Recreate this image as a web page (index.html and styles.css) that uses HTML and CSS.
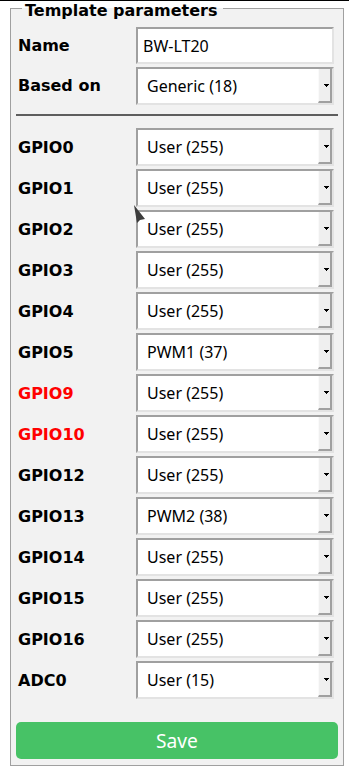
FILE: index.html
```html
<!DOCTYPE html>
<html lang="en">
<head>
  <meta charset="UTF-8" />
  <meta name="viewport" content="width=device-width, initial-scale=1.0" />
  <title>Template parameters</title>
  <link rel="stylesheet" href="styles.css">
</head>
<body>
  <div class="topline"></div>

  <fieldset class="tpl">
    <legend>Template parameters</legend>

    <div class="head">
      <div class="row name-row">
        <label for="s1">Name</label>
        <input id="s1" type="text" value="BW-LT20" />
      </div>
      <div class="row">
        <label for="g99">Based on</label>
        <div class="sel">
          <select id="g99"><option>Generic (18)</option></select>
          <span class="arrow"><svg width="5" height="3" viewBox="0 0 5 3"><path d="M0 0h5v1h-1v1h-1v1h-1v-1h-1v-1h-1z"/></svg></span>
        </div>
      </div>
    </div>

    <hr />

    <div class="gpios">
      <div class="row">
        <label for="g0">GPIO0</label>
        <div class="sel"><select id="g0"><option>User (255)</option></select><span class="arrow"><svg width="5" height="3" viewBox="0 0 5 3"><path d="M0 0h5v1h-1v1h-1v1h-1v-1h-1v-1h-1z"/></svg></span></div>
      </div>
      <div class="row">
        <label for="g1">GPIO1</label>
        <div class="sel"><select id="g1"><option>User (255)</option></select><span class="arrow"><svg width="5" height="3" viewBox="0 0 5 3"><path d="M0 0h5v1h-1v1h-1v1h-1v-1h-1v-1h-1z"/></svg></span></div>
      </div>
      <div class="row">
        <label for="g2">GPIO2</label>
        <div class="sel"><select id="g2"><option>User (255)</option></select><span class="arrow"><svg width="5" height="3" viewBox="0 0 5 3"><path d="M0 0h5v1h-1v1h-1v1h-1v-1h-1v-1h-1z"/></svg></span></div>
      </div>
      <div class="row">
        <label for="g3">GPIO3</label>
        <div class="sel"><select id="g3"><option>User (255)</option></select><span class="arrow"><svg width="5" height="3" viewBox="0 0 5 3"><path d="M0 0h5v1h-1v1h-1v1h-1v-1h-1v-1h-1z"/></svg></span></div>
      </div>
      <div class="row">
        <label for="g4">GPIO4</label>
        <div class="sel"><select id="g4"><option>User (255)</option></select><span class="arrow"><svg width="5" height="3" viewBox="0 0 5 3"><path d="M0 0h5v1h-1v1h-1v1h-1v-1h-1v-1h-1z"/></svg></span></div>
      </div>
      <div class="row">
        <label for="g5">GPIO5</label>
        <div class="sel"><select id="g5"><option>PWM1 (37)</option></select><span class="arrow"><svg width="5" height="3" viewBox="0 0 5 3"><path d="M0 0h5v1h-1v1h-1v1h-1v-1h-1v-1h-1z"/></svg></span></div>
      </div>
      <div class="row">
        <label for="g9" class="flash">GPIO9</label>
        <div class="sel"><select id="g9"><option>User (255)</option></select><span class="arrow"><svg width="5" height="3" viewBox="0 0 5 3"><path d="M0 0h5v1h-1v1h-1v1h-1v-1h-1v-1h-1z"/></svg></span></div>
      </div>
      <div class="row">
        <label for="g10" class="flash">GPIO10</label>
        <div class="sel"><select id="g10"><option>User (255)</option></select><span class="arrow"><svg width="5" height="3" viewBox="0 0 5 3"><path d="M0 0h5v1h-1v1h-1v1h-1v-1h-1v-1h-1z"/></svg></span></div>
      </div>
      <div class="row">
        <label for="g12">GPIO12</label>
        <div class="sel"><select id="g12"><option>User (255)</option></select><span class="arrow"><svg width="5" height="3" viewBox="0 0 5 3"><path d="M0 0h5v1h-1v1h-1v1h-1v-1h-1v-1h-1z"/></svg></span></div>
      </div>
      <div class="row">
        <label for="g13">GPIO13</label>
        <div class="sel"><select id="g13"><option>PWM2 (38)</option></select><span class="arrow"><svg width="5" height="3" viewBox="0 0 5 3"><path d="M0 0h5v1h-1v1h-1v1h-1v-1h-1v-1h-1z"/></svg></span></div>
      </div>
      <div class="row">
        <label for="g14">GPIO14</label>
        <div class="sel"><select id="g14"><option>User (255)</option></select><span class="arrow"><svg width="5" height="3" viewBox="0 0 5 3"><path d="M0 0h5v1h-1v1h-1v1h-1v-1h-1v-1h-1z"/></svg></span></div>
      </div>
      <div class="row">
        <label for="g15">GPIO15</label>
        <div class="sel"><select id="g15"><option>User (255)</option></select><span class="arrow"><svg width="5" height="3" viewBox="0 0 5 3"><path d="M0 0h5v1h-1v1h-1v1h-1v-1h-1v-1h-1z"/></svg></span></div>
      </div>
      <div class="row">
        <label for="g16">GPIO16</label>
        <div class="sel"><select id="g16"><option>User (255)</option></select><span class="arrow"><svg width="5" height="3" viewBox="0 0 5 3"><path d="M0 0h5v1h-1v1h-1v1h-1v-1h-1v-1h-1z"/></svg></span></div>
      </div>
      <div class="row">
        <label for="g17">ADC0</label>
        <div class="sel"><select id="g17"><option>User (15)</option></select><span class="arrow"><svg width="5" height="3" viewBox="0 0 5 3"><path d="M0 0h5v1h-1v1h-1v1h-1v-1h-1v-1h-1z"/></svg></span></div>
      </div>
    </div>

    <button class="bgrn" type="button">Save</button>
  </fieldset>

  <!-- mouse pointer caught in the screenshot -->
  <svg class="cursor" width="12" height="20" viewBox="0 0 12 20"><path d="M0 0L3 18L6 15L11 14Z"/></svg>
</body>
</html>
```

FILE: styles.css
```css
body {
  margin: 0;
  background-color: #ffffff;
  font-family: "DejaVu Sans", Verdana, sans-serif;
  font-size: 16px;
  color: #000;
}
.topline {
  height: 1px;
  background-color: #000;
}
.tpl {
  margin: -4px 5px 0 10px;
  padding: 0 5px 6px;
  border: 1px solid #a0a0a0;
  background-color: #f2f2f2;
  min-width: 0;
}
.tpl legend {
  margin-left: 6px;
  padding: 4px 5px 0 3px;
  line-height: 19px;
  font-weight: bold;
}
.head {
  margin-top: 7px;
  display: flex;
  flex-direction: column;
  gap: 3px;
}
.row {
  display: grid;
  grid-template-columns: 120px 198px;
}
.row label {
  padding-left: 2px;
  line-height: 38px;
  font-weight: bold;
}
.gpios .row label {
  padding-top: 1px;
  line-height: 37px;
}
.row label.flash {
  color: #ff0000;
}
.name-row label {
  line-height: 37px;
}
input,
select {
  box-sizing: border-box;
  width: 100%;
  margin: 0;
  border: 2px solid;
  border-color: #a0a0a0 #e3e3e3 #e3e3e3 #a0a0a0;
  border-radius: 0;
  background-color: #fff;
  color: #000;
  font-family: "Noto Sans", "Open Sans", sans-serif;
  font-size: 16px;
  outline: none;
}
input {
  height: 37px;
  padding: 0 6px 0 5px;
}
.sel {
  position: relative;
  height: 38px;
}
select {
  -webkit-appearance: none;
  appearance: none;
  height: 38px;
  padding: 0 20px 0 9px;
}
.arrow {
  position: absolute;
  top: 2px;
  right: 2px;
  bottom: 2px;
  width: 14px;
  box-sizing: border-box;
  display: flex;
  align-items: center;
  justify-content: flex-end;
  padding-right: 1px;
  background-color: #efefef;
  border-left: 1px solid #fafafa;
  border-right: 2px solid #a0a0a0;
  border-bottom: 2px solid #a0a0a0;
  pointer-events: none;
}
.arrow svg {
  display: block;
  fill: #000;
}
hr {
  margin: 9px 0 12px;
  height: 0;
  border: 0;
  border-top: 2px solid #5e5e5e;
}
.gpios {
  display: flex;
  flex-direction: column;
  gap: 3px;
}
.bgrn {
  display: block;
  width: 100%;
  margin-top: 23px;
  height: 37px;
  padding: 0;
  border: 0;
  border-radius: 5px;
  background-color: #47c266;
  color: #fff;
  font-family: "Noto Sans", "Open Sans", sans-serif;
  font-size: 19.2px;
  line-height: 37px;
  cursor: pointer;
}
.cursor {
  position: absolute;
  left: 134px;
  top: 205px;
  fill: #3c3c3c;
}
```
